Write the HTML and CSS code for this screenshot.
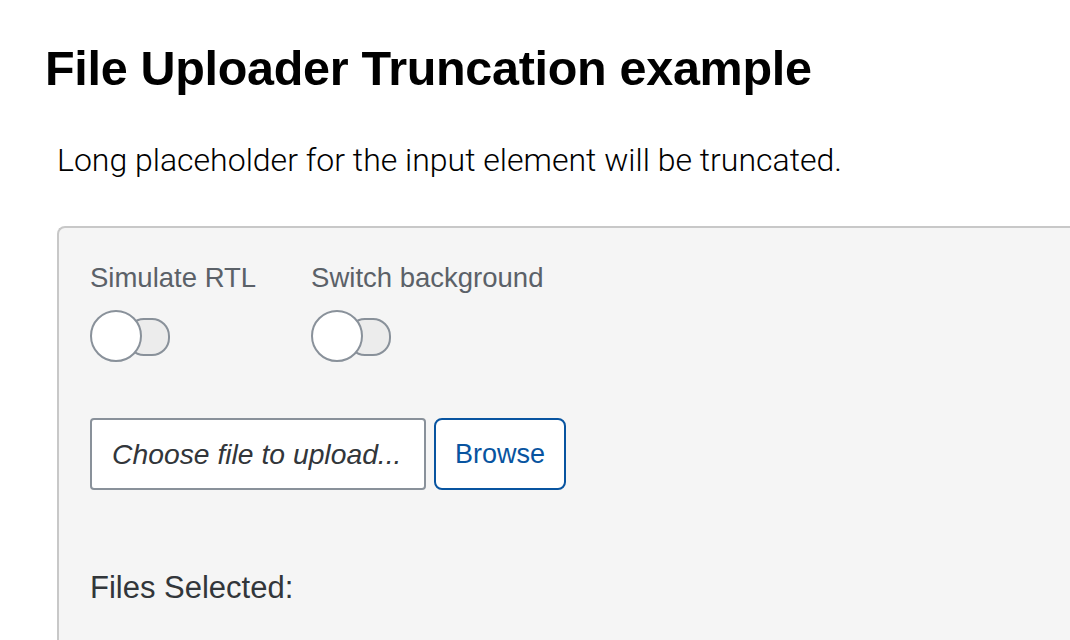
FILE: index.html
```html
<!DOCTYPE html>
<html lang="en">
<head>
    <meta charset="UTF-8">
    <meta name="viewport" content="width=device-width, initial-scale=1.0">
    <title>File Uploader Truncation example</title>
    <link rel="stylesheet" href="styles.css">
</head>
<body>

    <h1 class="page-title">File Uploader Truncation example</h1>
    <p class="page-desc">Long placeholder for the input element will be truncated.</p>

    <div class="demo-panel">
        <div class="toggles">
            <div class="toggle-field">
                <label>Simulate RTL</label>
                <span class="switch"><span class="switch-knob"></span></span>
            </div>
            <div class="toggle-field">
                <label>Switch background</label>
                <span class="switch"><span class="switch-knob"></span></span>
            </div>
        </div>

        <div class="uploader">
            <input type="text" class="uploader-input" placeholder="Choose file to upload..." readonly>
            <button class="uploader-btn">Browse</button>
        </div>

        <div class="files-selected">Files Selected:</div>
    </div>

</body>
</html>
```

FILE: styles.css
```css
body {
    margin: 0;
    padding: 0 0 0 45px;
    font-family: "Liberation Sans", Arial, sans-serif;
    color: #32363a;
    background: #fff;
    overflow: hidden;
    height: 640px;
}
.page-title {
    margin: 40px 0 0 0;
    font-size: 48.5px;
    font-weight: bold;
    color: #000;
    letter-spacing: -0.3px;
}
.page-desc {
    margin: 45px 0 0 12px;
    font-family: Roboto, sans-serif;
    font-weight: 300;
    font-size: 32px;
    color: #000;
}
.demo-panel {
    margin: 47px 0 0 12px;
    height: 400px;
    background: #f5f5f5;
    border-top: 2px solid #c8c8c8;
    border-left: 2px solid #c8c8c8;
    border-top-left-radius: 8px;
    padding: 34px 0 0 31px;
}
.toggles {
    display: flex;
    gap: 55px;
}
.toggle-field label {
    display: block;
    font-size: 27.5px;
    color: #5b6168;
    margin-bottom: 16px;
}
.switch {
    position: relative;
    display: block;
    width: 80px;
    height: 52px;
}
.switch::before {
    content: "";
    position: absolute;
    left: 36px;
    top: 8px;
    width: 40px;
    height: 34px;
    background: #ececec;
    border: 2px solid #89919a;
    border-radius: 18px;
}
.switch-knob {
    position: absolute;
    left: 0;
    top: 0;
    width: 48px;
    height: 48px;
    background: #fff;
    border: 2px solid #89919a;
    border-radius: 50%;
}
.uploader {
    display: flex;
    gap: 8px;
    margin-top: 56px;
}
.uploader-input {
    width: 336px;
    height: 72px;
    box-sizing: border-box;
    border: 2px solid #89919a;
    border-radius: 4px;
    padding: 0 20px;
    font-family: "Liberation Sans", Arial, sans-serif;
    font-size: 28.3px;
    font-style: italic;
    background: #fff;
}
.uploader-input::placeholder {
    color: #32363a;
}
.uploader-btn {
    width: 132px;
    height: 72px;
    border: 2px solid #0854a0;
    border-radius: 8px;
    background: #fff;
    color: #0854a0;
    font-family: "Liberation Sans", Arial, sans-serif;
    font-size: 27px;
}
.files-selected {
    margin-top: 80px;
    font-size: 31px;
    color: #32363a;
}
```
